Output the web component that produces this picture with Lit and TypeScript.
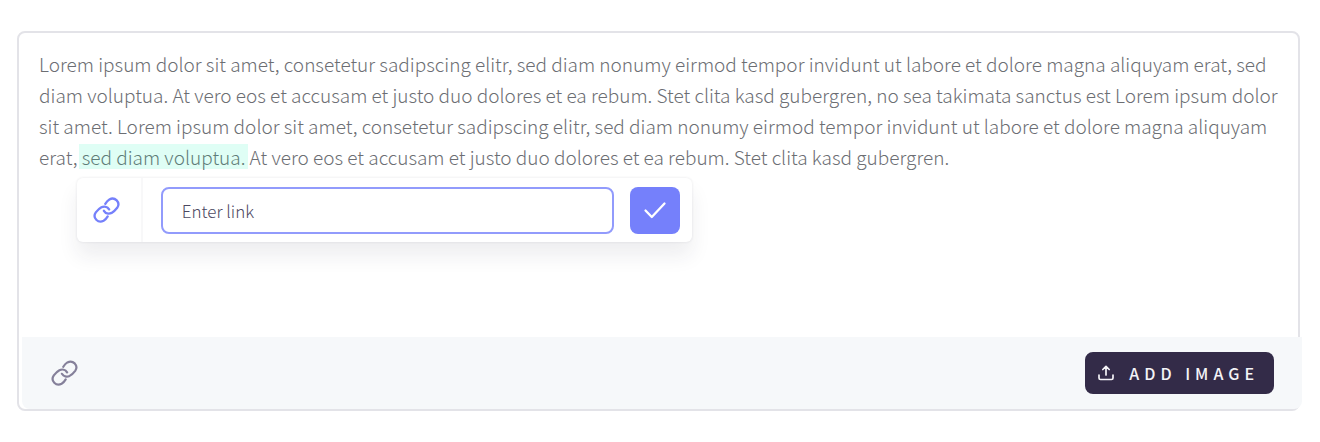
import { LitElement, html, css, svg } from "lit";
import { customElement } from "lit/decorators.js";

const linkIcon = svg`
  <path d="M12.3 6.8C13.6 4.6 14.8 3.3 16.4 2.4 18.7 1.2 21.8 1.5 23.7 3.4 25.6 5.4 25.8 8.5 24.2 10.8 22.6 12.9 20.6 14.8 18.6 15.9 15.9 17.2 12.6 16.6 10.9 13.8" />
  <path d="M14.7 19.4C13.4 21.6 12.2 22.9 10.6 23.8 8.3 25 5.2 24.7 3.3 22.8 1.4 20.8 1.2 17.7 2.8 15.4 4.4 13.3 6.4 11.4 8.4 10.3 11.1 9 14.4 9.6 16.1 12.4" />
`;

@customElement("link-popover")
class LinkPopover extends LitElement {
  static styles = css`
    :host {
      display: block;
    }
    .popover {
      display: flex;
      box-sizing: border-box;
      height: 64px;
      background: #fff;
      border-radius: 6px;
      box-shadow: 0 0 2px 1px rgba(40, 40, 60, 0.05), 0 14px 20px rgba(40, 40, 60, 0.08);
    }
    .kind {
      display: flex;
      align-items: center;
      justify-content: center;
      width: 66px;
      padding-right: 4px;
      box-sizing: border-box;
      border-right: 2px solid #f8f8f9;
      color: #7580fb;
    }
    .form {
      display: flex;
      flex: 1;
      align-items: center;
      gap: 16px;
      margin: 0;
      padding: 0 12px 0 18px;
    }
    .field {
      flex: 1;
      min-width: 0;
      height: 47px;
      box-sizing: border-box;
      padding: 0 19px;
      border: 2px solid #929bfc;
      border-radius: 8px;
      outline: none;
      background: #fff;
      color: #4c4861;
      font: inherit;
      font-size: 17px;
    }
    .field::placeholder {
      color: #4c4861;
      opacity: 1;
    }
    .confirm {
      display: flex;
      align-items: center;
      justify-content: center;
      width: 50px;
      height: 47px;
      padding: 0;
      border: 0;
      border-radius: 8px;
      background: #7580fb;
      color: #fff;
      cursor: pointer;
    }
    svg {
      display: block;
      fill: none;
      stroke: currentColor;
      stroke-width: 2.3;
      stroke-linecap: round;
      stroke-linejoin: round;
    }
  `;

  render() {
    return html`
      <div class="popover">
        <div class="kind">
          <svg width="27" height="27" viewBox="0 0 27 27" aria-hidden="true">${linkIcon}</svg>
        </div>
        <form class="form" @submit=${(e: Event) => e.preventDefault()}>
          <input class="field" type="text" placeholder="Enter link" aria-label="Enter link" />
          <button class="confirm" type="submit" aria-label="Apply link">
            <svg width="24" height="20" viewBox="0 0 24 20" aria-hidden="true">
              <path d="M2.5 10.5 8.8 17 21.5 3.5" />
            </svg>
          </button>
        </form>
      </div>
    `;
  }
}

@customElement("app-root")
class AppRoot extends LitElement {
  static styles = css`
    :host {
      display: block;
      padding: 31px 20px 31px 17px;
      background: #fff;
      font-family: "Noto Sans CJK SC", "Noto Sans", sans-serif;
      font-weight: 300;
    }
    .editor {
      display: flex;
      flex-direction: column;
      box-sizing: border-box;
      min-height: 380px;
      border: 2px solid #e3e3e8;
      border-radius: 8px;
    }
    .content {
      flex: 1;
      padding: 15px 12px 0 20px;
      color: #6c6e73;
      font-size: 19px;
      line-height: 31px;
    }
    .anchor {
      position: relative;
      display: inline-block;
    }
    .highlight {
      display: inline-block;
      margin: 0 -3px;
      padding: 0 3px;
      background: #dffef5;
      color: #5f7d78;
      line-height: 25px;
    }
    .popup {
      position: absolute;
      top: 37px;
      left: -5px;
      width: 615px;
      z-index: 1;
    }
    .toolbar {
      display: flex;
      align-items: center;
      justify-content: space-between;
      height: 72px;
      margin: 0 -4px 0 3px;
      padding: 0 28px 0 29px;
      box-sizing: border-box;
      border-radius: 0 0 8px 8px;
      background: #f6f8fa;
    }
    .tool {
      display: flex;
      padding: 0;
      border: 0;
      background: none;
      color: #85809a;
      cursor: pointer;
    }
    .add {
      display: flex;
      align-items: center;
      gap: 15px;
      height: 42px;
      padding: 0 15px 0 13px;
      border: 0;
      border-radius: 8px;
      background: #332b48;
      color: #f4f3f7;
      font: inherit;
      font-size: 16px;
      font-weight: 500;
      letter-spacing: 5px;
      cursor: pointer;
    }
    svg {
      display: block;
      fill: none;
      stroke: currentColor;
      stroke-width: 2.2;
      stroke-linecap: round;
      stroke-linejoin: round;
    }
    .upload {
      stroke-width: 1.7;
    }
  `;

  render() {
    return html`
      <section class="editor">
        <div class="content">
          Lorem ipsum dolor sit amet, consetetur sadipscing elitr, sed diam nonumy eirmod tempor
          invidunt ut labore et dolore magna aliquyam erat, sed diam voluptua. At vero eos et
          accusam et justo duo dolores et ea rebum. Stet clita kasd gubergren, no sea takimata
          sanctus est Lorem ipsum dolor sit amet. Lorem ipsum dolor sit amet, consetetur sadipscing
          elitr, sed diam nonumy eirmod tempor invidunt ut labore et dolore magna aliquyam erat,
          <span class="anchor"
            ><mark class="highlight">sed diam voluptua.</mark
            ><link-popover class="popup"></link-popover
          ></span>
          At vero eos et accusam et justo duo dolores et ea rebum. Stet clita kasd gubergren.
        </div>
        <div class="toolbar">
          <button class="tool" type="button" aria-label="Insert link">
            <svg width="27" height="27" viewBox="0 0 27 27" aria-hidden="true">${linkIcon}</svg>
          </button>
          <button class="add" type="button">
            <svg class="upload" width="16" height="16" viewBox="0 0 16 16" aria-hidden="true">
              <path d="M1 10v3c0 .9.6 1.5 1.5 1.5h11c.9 0 1.5-.6 1.5-1.5v-3M8 10V1.5M4.8 4.5 8 1.3l3.2 3.2" />
            </svg>
            ADD IMAGE
          </button>
        </div>
      </section>
    `;
  }
}
